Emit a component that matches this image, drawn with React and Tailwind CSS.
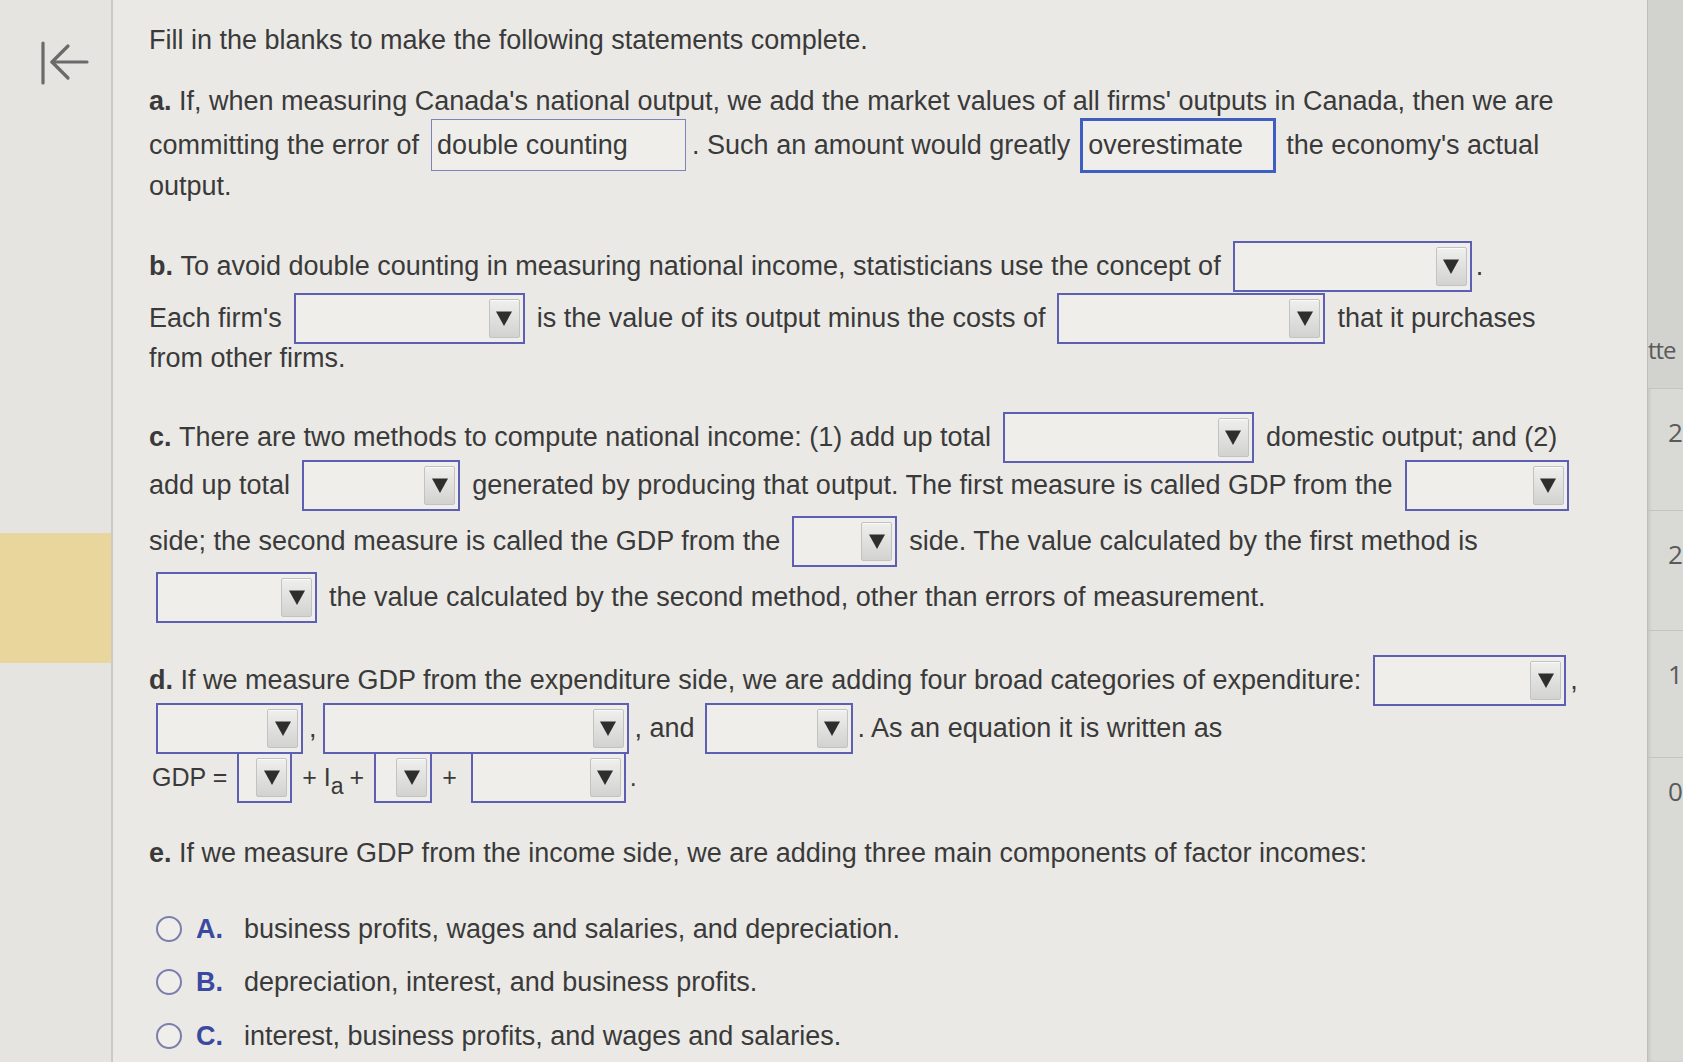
import React from "react";

// Dropdown blank: outlined box with a grey button holding a down triangle
function Drop({ w, className = "" }) {
  return (
    <span
      className={`inline-flex ${w} h-[51px] shrink-0 items-stretch justify-end border-2 border-[#5d5fb3] bg-[#efeeea] py-[4px] pr-[3px] ${className}`}
    >
      <span className="flex w-[31px] items-center justify-center rounded-[2px] border border-[#c2c2c0] bg-gradient-to-b from-[#efefed] to-[#d2d2d0] shadow-[inset_0_1px_0_#fafafa]">
        <svg width="18" height="17" viewBox="0 0 18 17">
          <path d="M1 1.5h16L9 16z" fill="#2e2e2e" />
        </svg>
      </span>
    </span>
  );
}

function Row({ className = "", children }) {
  return (
    <div className={`flex items-center whitespace-nowrap ${className}`}>
      {children}
    </div>
  );
}

function Radio({ letter, text, className = "" }) {
  return (
    <Row className={`h-[30px] ${className}`}>
      <span className="ml-[7px] h-[26px] w-[26px] shrink-0 rounded-full border-2 border-[#7b7fab] bg-[#efeeea]" />
      <span className="ml-[14px] w-[48px] font-bold text-[#3b49a0]">{letter}.</span>
      <span>{text}</span>
    </Row>
  );
}

export default function App() {
  return (
    <div className="flex h-[1062px] w-[1683px] overflow-hidden bg-[#eae9e5] font-['Liberation_Sans',Arial,sans-serif] text-[27px] leading-none text-[#3a3a3a]">
      {/* left rail */}
      <aside className="flex w-[113px] shrink-0 flex-col border-r-2 border-[#cbcac6] bg-[#e5e4e0]">
        <div className="pl-[40px] pt-[41px]">
          <svg width="50" height="44" viewBox="0 0 50 44" fill="none" stroke="#6a6a6a" strokeWidth="3.2" strokeLinecap="round" strokeLinejoin="round">
            <path d="M3 2v40" />
            <path d="M12 21h35" />
            <path d="M28 5L12 21l16 16" />
          </svg>
        </div>
        <div className="mt-[448px] h-[130px] bg-[#e9d69c]" />
      </aside>

      {/* question body */}
      <main className="flex-1 pl-[36px] pt-[22px]">
        <Row className="h-[36px]">Fill in the blanks to make the following statements complete.</Row>

        <Row className="mt-[26px] h-[34px]">
          <span className="font-bold">a.</span>
          <span>&nbsp;If, when measuring Canada's national output, we add the market values of all firms' outputs in Canada, then we are</span>
        </Row>
        <Row className="h-[54px]">
          committing the error of
          <span className="ml-[12px] flex h-[52px] w-[255px] items-center border-[1.5px] border-[#7d83b4] bg-[#efeeea] pl-[5px]">double counting</span>
          <span className="ml-[6px]">. Such an amount would greatly</span>
          <span className="ml-[10px] flex h-[55px] w-[196px] items-center border-[3px] border-[#3f5ec1] bg-[#efeeea] pl-[5px]">overestimate</span>
          <span className="ml-[10px]">the economy's actual</span>
        </Row>
        <Row className="h-[28px]">output.</Row>

        <Row className="mt-[40px] h-[52px]">
          <span className="font-bold">b.</span>
          <span>&nbsp;To avoid double counting in measuring national income, statisticians use the concept of</span>
          <Drop w="w-[239px]" className="ml-[12px]" />
          <span className="ml-[4px]">.</span>
        </Row>
        <Row className="h-[52px]">
          Each firm's
          <Drop w="w-[231px]" className="mx-[12px]" />
          is the value of its output minus the costs of
          <Drop w="w-[268px]" className="mx-[12px]" />
          that it purchases
        </Row>
        <Row className="h-[28px]">from other firms.</Row>

        <Row className="mt-[41px] h-[48px]">
          <span className="font-bold">c.</span>
          <span>&nbsp;There are two methods to compute national income: (1) add up total</span>
          <Drop w="w-[251px]" className="mx-[12px]" />
          domestic output; and (2)
        </Row>
        <Row className="h-[48px]">
          add up total
          <Drop w="w-[158px]" className="mx-[12px]" />
          generated by producing that output. The first measure is called GDP from the
          <Drop w="w-[164px]" className="ml-[12px]" />
        </Row>
        <Row className="mt-[7px] h-[50px]">
          side; the second measure is called the GDP from the
          <Drop w="w-[105px]" className="mx-[12px]" />
          side. The value calculated by the first method is
        </Row>
        <Row className="mt-[6px] h-[50px]">
          <Drop w="w-[161px]" className="ml-[7px] mr-[12px]" />
          the value calculated by the second method, other than errors of measurement.
        </Row>

        <Row className="mt-[34px] h-[48px]">
          <span className="font-bold">d.</span>
          <span>&nbsp;If we measure GDP from the expenditure side, we are adding four broad categories of expenditure:</span>
          <Drop w="w-[193px]" className="ml-[12px]" />
          <span className="ml-[4px]">,</span>
        </Row>
        <Row className="h-[48px]">
          <Drop w="w-[147px]" className="ml-[7px]" />
          <span className="mx-[6px]">,</span>
          <Drop w="w-[306px]" />
          <span className="ml-[6px] mr-[10px]">, and</span>
          <Drop w="w-[148px]" />
          <span className="ml-[5px]">. As an equation it is written as</span>
        </Row>
        <Row className="h-[50px] text-[25px]">
          <span className="ml-[3px]">GDP =</span>
          <Drop w="w-[55px]" className="ml-[10px] mr-[10px]" />
          <span>+ I</span>
          <span className="relative top-[9px] text-[23px]">a</span>
          <span className="ml-[6px]">+</span>
          <Drop w="w-[58px]" className="ml-[10px] mr-[10px]" />
          <span>+</span>
          <Drop w="w-[155px]" className="ml-[14px] mr-[4px]" />
          <span>.</span>
        </Row>

        <Row className="mt-[36px] h-[30px]">
          <span className="font-bold">e.</span>
          <span>&nbsp;If we measure GDP from the income side, we are adding three main components of factor incomes:</span>
        </Row>

        <Radio className="mt-[46px]" letter="A" text="business profits, wages and salaries, and depreciation." />
        <Radio className="mt-[23px]" letter="B" text="depreciation, interest, and business profits." />
        <Radio className="mt-[24px]" letter="C" text="interest, business profits, and wages and salaries." />
      </main>

      {/* score column at the right edge, cut by the photo frame */}
      <div className="flex w-[36px] shrink-0 flex-col overflow-hidden border-l border-[#bdbdba] bg-[#d9d9d6] font-['Open_Sans',sans-serif] text-[26px] text-[#5a5a5a] shadow-[inset_2px_0_3px_rgba(0,0,0,0.08)]">
        <div className="flex h-[388px] items-end bg-[#d2d2cf] pb-[26px]">
          <span className="whitespace-nowrap text-[24px] tracking-[-1px]">tte</span>
        </div>
        <div className="h-[122px] border-t border-[#c4c4c1] pl-[20px] pt-[30px]">2</div>
        <div className="h-[120px] border-t border-[#c4c4c1] pl-[20px] pt-[30px]">2</div>
        <div className="h-[127px] border-t border-[#c4c4c1] pl-[20px] pt-[30px]">1</div>
        <div className="flex-1 border-t border-[#c4c4c1] pl-[20px] pt-[20px]">0</div>
      </div>
    </div>
  );
}
